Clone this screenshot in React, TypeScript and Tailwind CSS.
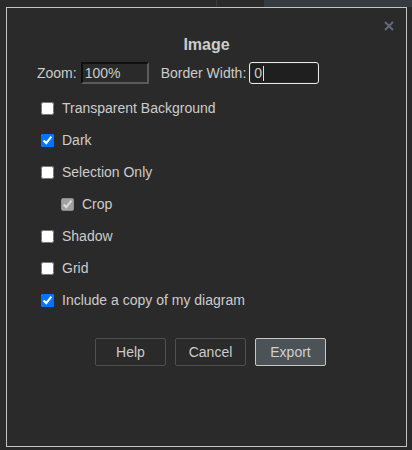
import React from "react";

function Row({
  label,
  checked,
  disabled,
  indent,
}: {
  label: string;
  checked?: boolean;
  disabled?: boolean;
  indent?: boolean;
}) {
  return (
    <label className={`flex h-[32px] items-center gap-[8px] ${indent ? "pl-[20px]" : ""}`}>
      <input
        type="checkbox"
        defaultChecked={checked}
        disabled={disabled}
        className="m-0 h-[13px] w-[13px] accent-[#0075ff]"
      />
      <span className="text-[14px] text-[#cccccc]">{label}</span>
    </label>
  );
}

export default function App() {
  return (
    <div
      className="relative h-[450px] w-[412px] overflow-hidden bg-[#2a2a2a]"
      style={{ fontFamily: '"Liberation Sans", Arial, sans-serif' }}
    >
      <div className="flex h-[7px]">
        <div className="w-[67px]" />
        <div className="w-[150px] border-r border-[#3a3a3a]" />
        <div className="w-[47px]" />
        <div className="flex-1 bg-[#363b41]" />
      </div>
      <div className="ml-[6px] flex h-[440px] w-[401px] flex-col border border-[#c4c4c4] bg-[#2a2a2a] pl-[34px] pt-[27px]">
        <button className="absolute left-[382px] top-[19px] flex h-[13px] w-[13px] items-center justify-center text-[#5f6a7b]">
          <svg width="10" height="10" viewBox="0 0 10 10">
            <path d="M1 1L9 9M9 1L1 9" stroke="currentColor" strokeWidth="2" />
          </svg>
        </button>
        <div className="-ml-[34px] h-[20px] text-center text-[16px] font-bold leading-[20px] text-[#cccccc]">
          Image
        </div>
        <div className="-ml-[4px] mt-[7px] flex h-[22px] items-center text-[14px] text-[#cccccc]">
          <span>Zoom:</span>
          <input
            defaultValue="100%"
            className="ml-[4px] h-[22px] w-[68px] border-[2px] border-t-[#0f0f0f] border-l-[#0f0f0f] border-b-[#5a5a5a] border-r-[#5a5a5a] bg-[#2a2a2a] px-[2px] text-[14px] text-[#cccccc] outline-none"
          />
          <span className="ml-[12px]">Border Width:</span>
          <div className="ml-[3px] h-[22px] w-[70px] rounded-[3px] border border-[#e8e8e8] p-[1px]">
            <div className="flex h-full w-full items-center bg-[#1f1f1f] pl-[3px] text-[14px] text-[#cccccc]">
              0<span className="ml-[1px] inline-block h-[15px] w-px bg-[#dddddd]" />
            </div>
          </div>
        </div>
        <div className="mt-[8px] flex flex-col">
          <Row label="Transparent Background" />
          <Row label="Dark" checked />
          <Row label="Selection Only" />
          <Row label="Crop" checked disabled indent />
          <Row label="Shadow" />
          <Row label="Grid" />
          <Row label="Include a copy of my diagram" checked />
        </div>
        <div className="ml-[54px] mt-[22px] flex gap-[9px]">
          <button className="h-[28px] w-[71px] rounded-[2px] border border-[#505050] bg-[#2a2a2a] text-[14px] text-[#cccccc]">
            Help
          </button>
          <button className="h-[28px] w-[71px] rounded-[2px] border border-[#505050] bg-[#2a2a2a] text-[14px] text-[#cccccc]">
            Cancel
          </button>
          <button className="h-[28px] w-[71px] rounded-[2px] border border-[#c8c8c8] bg-[#4b5356] text-[14px] text-[#d0d0d0]">
            Export
          </button>
        </div>
      </div>
    </div>
  );
}
